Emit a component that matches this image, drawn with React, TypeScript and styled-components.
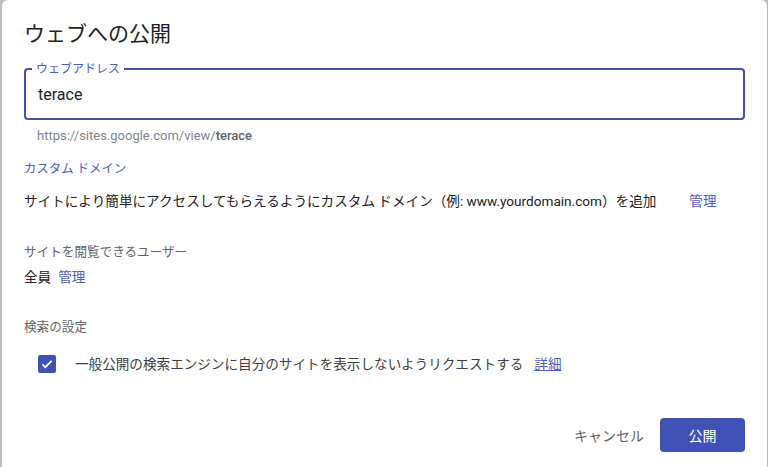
import styled, { createGlobalStyle } from "styled-components";

const GlobalStyle = createGlobalStyle`
  html, body {
    margin: 0;
    padding: 0;
    background: #bdbdbd;
  }
  body {
    font-family: Roboto, "Noto Sans CJK JP", sans-serif;
    -webkit-font-smoothing: antialiased;
  }
`;

const Dialog = styled.div`
  box-sizing: border-box;
  margin-left: 2px;
  width: 765px;
  height: 467px;
  background: #fff;
  border-radius: 6px 6px 0 0;
  padding: 20px 22px 0 22px;
  color: #202124;
`;

const Title = styled.h2`
  margin: 0;
  font-size: 21px;
  line-height: 28px;
  font-weight: 400;
  color: #202124;
`;

const Field = styled.fieldset`
  position: relative;
  box-sizing: border-box;
  margin: 20px 0 0 0;
  height: 52px;
  border: 2px solid #3f51b5;
  border-radius: 4px;
  padding: 0 12px;
  display: flex;
  align-items: center;
`;

const FieldLabel = styled.span`
  position: absolute;
  top: -9px;
  left: 6px;
  padding: 0 4px;
  background: #fff;
  font-size: 12px;
  line-height: 16px;
  color: #4a5ec4;
`;

const FieldValue = styled.span`
  font-size: 16px;
  color: #202124;
`;

const Helper = styled.div`
  margin: 8px 0 0 13px;
  font-size: 13px;
  line-height: 16px;
  color: #80868b;

  b {
    color: #5f6368;
    font-weight: 500;
  }
`;

const Link = styled.a<{ $underline?: boolean }>`
  color: #4a5ec4;
  text-decoration: ${(p) => (p.$underline ? "underline" : "none")};
  cursor: pointer;
`;

const SectionLink = styled.div`
  margin-top: 15px;
  font-size: 12.4px;
  line-height: 20px;
  color: #4a5ec4;
`;

const Row = styled.div<{ $top: number }>`
  margin-top: ${(p) => p.$top}px;
  display: flex;
  align-items: center;
  font-size: 13.6px;
  line-height: 20px;
  color: #202124;
`;

const Caption = styled.div<{ $top: number }>`
  margin-top: ${(p) => p.$top}px;
  font-size: 12.6px;
  line-height: 20px;
  color: #5f6368;
`;

const Gap = styled.span<{ $w: number }>`
  display: inline-block;
  width: ${(p) => p.$w}px;
`;

const CheckRow = styled.div`
  margin: 17px 0 0 14px;
  display: flex;
  align-items: center;
  font-size: 13.6px;
  line-height: 20px;
  color: #3c4043;
`;

const Check = styled.span`
  width: 18px;
  height: 18px;
  border-radius: 2px;
  background: #3f51b5;
  display: flex;
  align-items: center;
  justify-content: center;
  margin-right: 19px;
`;

const Actions = styled.div`
  margin-top: 44px;
  display: flex;
  justify-content: flex-end;
  align-items: center;
  gap: 16px;
`;

const TextButton = styled.button`
  border: none;
  background: none;
  font-family: inherit;
  font-size: 14px;
  color: #5f6368;
  padding: 0;
  cursor: pointer;
`;

const PrimaryButton = styled.button`
  width: 85px;
  height: 34px;
  border: none;
  border-radius: 4px;
  background: #3f51b5;
  color: #fff;
  font-family: inherit;
  font-size: 14px;
  cursor: pointer;
`;

export default function App() {
  return (
    <>
      <GlobalStyle />
      <Dialog>
        <Title>ウェブへの公開</Title>
        <Field>
          <FieldLabel>ウェブアドレス</FieldLabel>
          <FieldValue>terace</FieldValue>
        </Field>
        <Helper>
          https://sites.google.com/view/<b>terace</b>
        </Helper>
        <SectionLink>カスタム ドメイン</SectionLink>
        <Row $top={12}>
          サイトにより簡単にアクセスしてもらえるようにカスタム ドメイン（例: www.yourdomain.com）を追加
          <Gap $w={33} />
          <Link>管理</Link>
        </Row>
        <Caption $top={31}>サイトを閲覧できるユーザー</Caption>
        <Row $top={5}>
          全員
          <Gap $w={7} />
          <Link>管理</Link>
        </Row>
        <Caption $top={30}>検索の設定</Caption>
        <CheckRow>
          <Check>
            <svg width="14" height="14" viewBox="0 0 24 24">
              <path
                d="M4 12.5l5 5L20 6.5"
                fill="none"
                stroke="#fff"
                strokeWidth="3"
              />
            </svg>
          </Check>
          一般公開の検索エンジンに自分のサイトを表示しないようリクエストする
          <Gap $w={11} />
          <Link $underline>詳細</Link>
        </CheckRow>
        <Actions>
          <TextButton>キャンセル</TextButton>
          <PrimaryButton>公開</PrimaryButton>
        </Actions>
      </Dialog>
    </>
  );
}
